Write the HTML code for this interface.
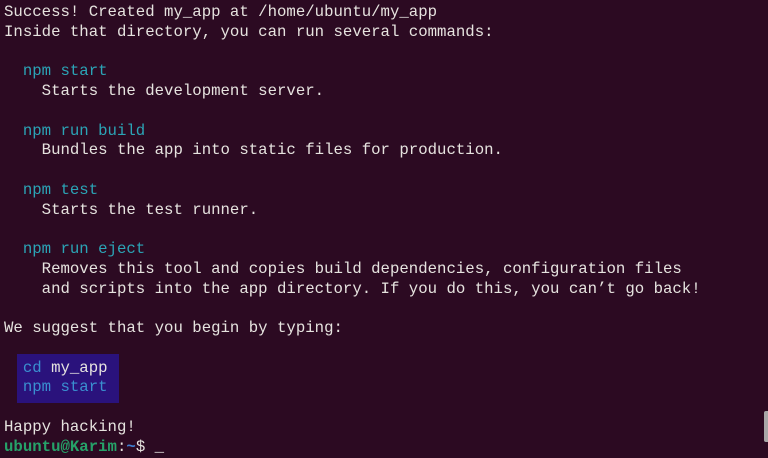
<!DOCTYPE html>
<html><head><style>
html,body{margin:0;padding:0;}
body{width:768px;height:458px;background:#2c0a22;overflow:hidden;position:relative;}
pre{margin:0;position:absolute;left:4px;top:3px;font-family:"Liberation Mono",monospace;font-size:15.7px;line-height:19.75px;color:#e6e3df;}
.c{color:#2ba4b6}
.hc{color:#3a8fd0}
.g{color:#26a269;font-weight:bold}
.b{color:#3f7fd0;font-weight:bold}
.hl{position:absolute;left:17px;top:354px;width:102px;height:49px;background:#2a127c;}
.sb{position:absolute;left:764px;top:411px;width:4px;height:31px;background:#a8a8a8;border-radius:2px 0 0 2px;}
</style></head><body>
<div class="hl"></div>
<div class="sb"></div>
<pre>Success! Created my_app at /home/ubuntu/my_app
Inside that directory, you can run several commands:

  <span class="c">npm start</span>
    Starts the development server.

  <span class="c">npm run build</span>
    Bundles the app into static files for production.

  <span class="c">npm test</span>
    Starts the test runner.

  <span class="c">npm run eject</span>
    Removes this tool and copies build dependencies, configuration files
    and scripts into the app directory. If you do this, you can’t go back!

We suggest that you begin by typing:

  <span class="hc">cd</span> my_app
  <span class="hc">npm start</span>

Happy hacking!
<span class="g">ubuntu@Karim</span>:<span class="b">~</span>$ _</pre>
</body></html>
